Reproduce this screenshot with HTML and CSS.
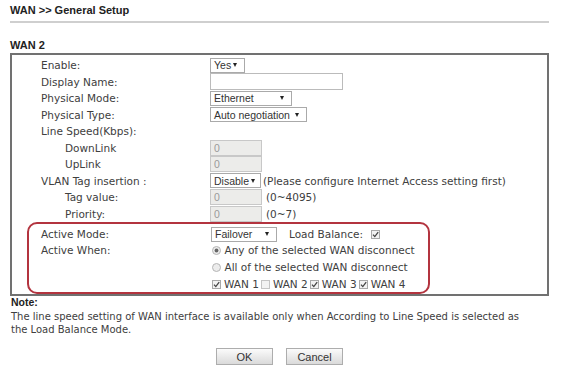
FILE: index.html
```html
<!DOCTYPE html>
<html>
<head>
<meta charset="utf-8">
<link rel="stylesheet" href="styles.css">
</head>
<body>
<div class="page">
  <div class="title">WAN &gt;&gt; General Setup</div>
  <div class="section">WAN 2</div>
  <div class="panel">
    <div class="row"><span class="label">Enable:</span><span class="sel w-yes"><span>Yes</span><span class="arr"></span></span></div>
    <div class="row"><span class="label">Display Name:</span><span class="inp w-name"></span></div>
    <div class="row"><span class="label">Physical Mode:</span><span class="sel w-eth"><span>Ethernet</span><span class="arr"></span></span></div>
    <div class="row"><span class="label">Physical Type:</span><span class="sel w-auto"><span>Auto negotiation</span><span class="arr"></span></span></div>
    <div class="row"><span class="label">Line Speed(Kbps):</span></div>
    <div class="row"><span class="label sub">DownLink</span><span class="inp dis">0</span></div>
    <div class="row"><span class="label sub">UpLink</span><span class="inp dis">0</span></div>
    <div class="row"><span class="label">VLAN Tag insertion :</span><span class="sel w-dis"><span>Disable</span><span class="arr"></span></span><span class="hint tight">(Please configure Internet Access setting first)</span></div>
    <div class="row"><span class="label sub">Tag value:</span><span class="inp dis">0</span><span class="hint">(0~4095)</span></div>
    <div class="row"><span class="label sub">Priority:</span><span class="inp dis">0</span><span class="hint">(0~7)</span></div>
    <div class="hl">
      <div class="row r1"><span class="label">Active Mode:</span><span class="sel w-fail"><span>Failover</span><span class="arr"></span></span><span class="lb">Load Balance:</span><svg class="cb" width="9" height="9" viewBox="0 0 9 9"><rect x="0.5" y="0.5" width="8" height="8" fill="#f2f2f2" stroke="#a8a8a8"/><path d="M2 4.6 L3.8 6.6 L7.2 2.2" fill="none" stroke="#444" stroke-width="1.3"/></svg></div>
      <div class="row r2"><span class="label">Active When:</span><span class="opt"><svg class="rd" width="9" height="9" viewBox="0 0 9 9"><circle cx="4.5" cy="4.5" r="4" fill="#ececec" stroke="#b4b4b4"/><circle cx="4.5" cy="4.5" r="1.9" fill="#666"/></svg>Any of the selected WAN disconnect</span></div>
      <div class="row r3"><span class="label"></span><span class="opt"><svg class="rd" width="9" height="9" viewBox="0 0 9 9"><circle cx="4.5" cy="4.5" r="4" fill="#ececec" stroke="#b4b4b4"/></svg>All of the selected WAN disconnect</span></div>
      <div class="row r4"><span class="label"></span><span class="opt">
        <svg class="cb" width="9" height="9" viewBox="0 0 9 9"><rect x="0.5" y="0.5" width="8" height="8" fill="#f2f2f2" stroke="#a8a8a8"/><path d="M2 4.6 L3.8 6.6 L7.2 2.2" fill="none" stroke="#444" stroke-width="1.3"/></svg><span class="wan">WAN 1</span>
        <svg class="cb" width="9" height="9" viewBox="0 0 9 9"><rect x="0.5" y="0.5" width="8" height="8" fill="#f2f2f2" stroke="#c4c4c4"/></svg><span class="wan">WAN 2</span>
        <svg class="cb" width="9" height="9" viewBox="0 0 9 9"><rect x="0.5" y="0.5" width="8" height="8" fill="#f2f2f2" stroke="#a8a8a8"/><path d="M2 4.6 L3.8 6.6 L7.2 2.2" fill="none" stroke="#444" stroke-width="1.3"/></svg><span class="wan">WAN 3</span>
        <svg class="cb" width="9" height="9" viewBox="0 0 9 9"><rect x="0.5" y="0.5" width="8" height="8" fill="#f2f2f2" stroke="#a8a8a8"/><path d="M2 4.6 L3.8 6.6 L7.2 2.2" fill="none" stroke="#444" stroke-width="1.3"/></svg><span class="wan">WAN 4</span>
      </span></div>
    </div>
  </div>
  <div class="note-h">Note:</div>
  <div class="note-text">The line speed setting of WAN interface is available only when According to Line Speed is selected as the Load Balance Mode.</div>
  <div class="actions">
    <button class="btn">OK</button>
    <button class="btn">Cancel</button>
  </div>
</div>
</body>
</html>
```
FILE: styles.css
```css
* { box-sizing: border-box; }
body {
  margin: 0;
  background: #fff;
  font-family: "DejaVu Sans", Verdana, sans-serif;
  font-size: 10.5px;
  color: #404040;
}
.page { width: 539px; margin-left: 10px; }
.title {
  font-family: "Liberation Sans", Arial, sans-serif;
  font-weight: bold;
  font-size: 11px;
  color: #222;
  height: 23px;
  padding-top: 4px;
  line-height: 12px;
  border-bottom: 2px solid #cfcfcf;
}
.section {
  font-family: "Liberation Sans", Arial, sans-serif;
  font-weight: bold;
  font-size: 11px;
  color: #222;
  margin-top: 17px;
  height: 13px;
  line-height: 10px;
}
.panel {
  border: 2px solid #717171;
  padding-top: 2px;
}
.row {
  display: flex;
  align-items: center;
  height: 16.5px;
  padding-left: 29px;
  white-space: nowrap;
}
.label { width: 169px; flex: none; }
.label.sub { padding-left: 24px; }
.sel, .inp {
  display: flex;
  align-items: center;
  flex: none;
  font-family: "Liberation Sans", Arial, sans-serif;
  font-size: 10.5px;
  color: #333;
  background: #fff;
  border: 1px solid #aaa;
  height: 15px;
  padding: 0 7px 0 3px;
}
.sel { justify-content: space-between; }
.w-dis { padding-right: 5px; }
.arr {
  width: 0; height: 0;
  border-left: 2.5px solid transparent;
  border-right: 2.5px solid transparent;
  border-top: 4px solid #222;
}
.w-yes { width: 35px; }
.w-eth { width: 82px; }
.w-auto { width: 97px; }
.w-dis { width: 51px; }
.w-fail { width: 66px; margin-left: 1px; }
.inp.w-name { width: 133px; height: 17px; border-color: #bbb; }
.inp.dis {
  width: 52px;
  height: 16px;
  background: #ececea;
  border-color: #c8c8c8;
  color: #9a9a9a;
}
.hint { margin-left: 4px; }
.hint.tight { margin-left: 2px; }
.hl {
  margin-left: 15px;
  width: 403px;
  border: 2px solid #b3343f;
  border-radius: 10px;
  padding-top: 2px;
}
.hl .row { padding-left: 12px; }
.hl .r1 { height: 16px; }
.hl .r2 { height: 16px; }
.hl .r3 { height: 18px; }
.hl .r4 { height: 16px; }
.lb { margin-left: 12px; margin-right: 8px; }
.opt { display: flex; align-items: center; margin-left: 2px; }
.rd { margin-right: 3.5px; flex: none; }
.cb { flex: none; }
.opt .cb { margin-right: 3px; }
.wan { margin-right: 2px; }
.note-h {
  font-family: "Liberation Sans", Arial, sans-serif;
  font-weight: bold;
  font-size: 10.5px;
  color: #222;
  line-height: 12px;
  padding-left: 1px;
}
.note-text {
  font-size: 10px;
  line-height: 13px;
  padding-top: 1.5px;
  padding-left: 1px;
  padding-right: 14px;
}
.actions {
  display: flex;
  justify-content: center;
  gap: 13px;
  margin-top: 12.5px;
}
.btn {
  width: 57px;
  height: 17px;
  padding: 0;
  border: 1px solid #adadad;
  border-radius: 0;
  background: linear-gradient(#fbfbfb, #dadada);
  font-family: "Liberation Sans", Arial, sans-serif;
  font-size: 11px;
  color: #333;
}
```
